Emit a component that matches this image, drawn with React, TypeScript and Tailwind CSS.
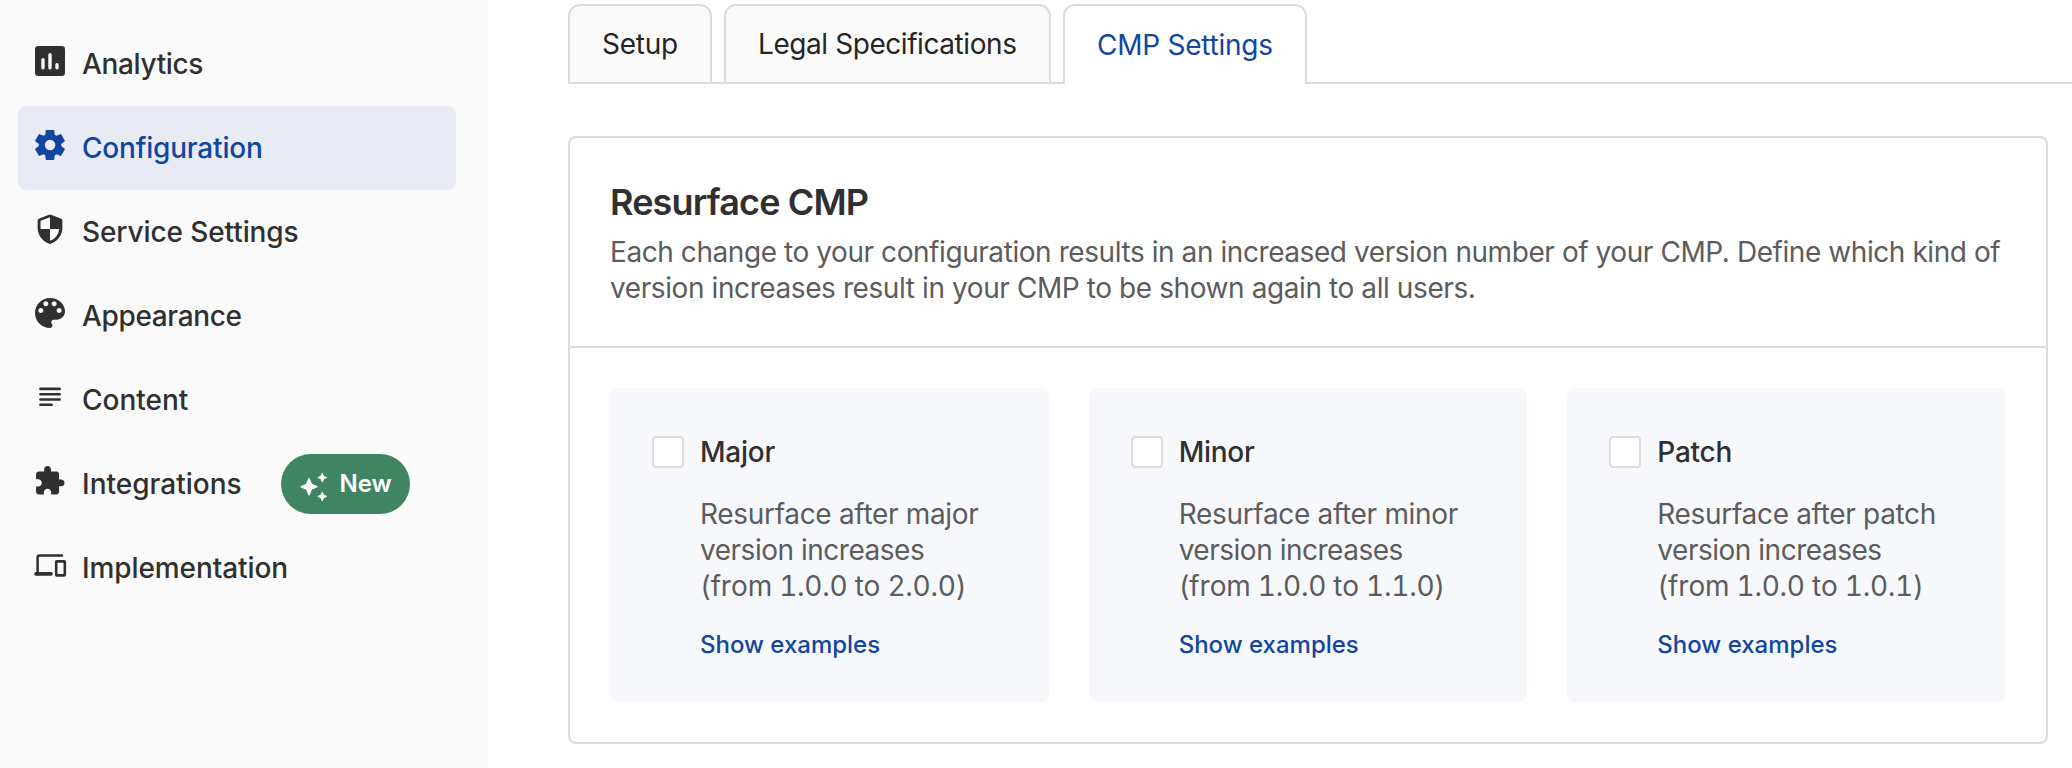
import React, { useState } from 'react';

interface NavItem {
    label: string;
    icon: React.ReactNode;
    textClass: string;
    isNew?: boolean;
}

interface VersionOption {
    title: string;
    description: string;
    range: string;
}

const AnalyticsIcon = () => (
    <svg viewBox="0 0 36 36" className="w-9 h-9" fill="currentColor">
        <rect x="3" y="3" width="30" height="30" rx="3.3" />
        <g fill="#fafafa">
            <rect x="9.3" y="15" width="3.4" height="11.5" rx="1.7" />
            <rect x="16.3" y="10" width="3.4" height="16.5" rx="1.7" />
            <rect x="23.3" y="20" width="3.4" height="6.5" rx="1.7" />
        </g>
    </svg>
);

const SettingsIcon = () => (
    <svg viewBox="0 -960 960 960" className="w-9 h-9" fill="currentColor">
        <path d="m370-80-16-128q-13-5-24.5-12T307-235l-119 50L78-375l103-78q-1-7-1-13.5v-27q0-6.5 1-13.5L78-585l110-190 119 50q11-8 23-15t24-12l16-128h220l16 128q13 5 24.5 12t22.5 15l119-50 110 190-103 78q1 7 1 13.5v27q0 6.5-2 13.5l103 78-110 190-118-50q-11 8-23 15t-24 12L590-80H370Zm112-260q58 0 99-41t41-99q0-58-41-99t-99-41q-59 0-99.5 41T342-480q0 58 40.5 99t99.5 41Z" />
    </svg>
);

const ShieldIcon = () => (
    <svg viewBox="0 -960 960 960" className="w-9 h-9" fill="currentColor">
        <path d="M480-80q-139-35-234.5-159.5T150-516v-189q0-35 32-48l270-105q28-10 56 0l270 105q32 13 32 48v189q0 152-95.5 276.5T480-80Zm0-84q97-30 165-118.5T725-480H480v-315l-252 98v199q0 7 2 18h250v316Z" />
    </svg>
);

const PaletteIcon = () => (
    <svg viewBox="0 0 24 24" className="w-10 h-10 -m-0.5" fill="currentColor">
        <path d="M12 3c-4.97 0-9 4.03-9 9s4.03 9 9 9c.83 0 1.5-.67 1.5-1.5 0-.39-.15-.74-.39-1.01-.23-.26-.38-.61-.38-.99 0-.83.67-1.5 1.5-1.5H16c2.76 0 5-2.24 5-5 0-4.42-4.03-8-9-8zm-5.5 9c-.83 0-1.5-.67-1.5-1.5S5.67 9 6.5 9 8 9.67 8 10.5 7.33 12 6.5 12zm3-4C8.67 8 8 7.33 8 6.5S8.67 5 9.5 5s1.5.67 1.5 1.5S10.33 8 9.5 8zm5 0c-.83 0-1.5-.67-1.5-1.5S13.67 5 14.5 5s1.5.67 1.5 1.5S15.33 8 14.5 8zm3 4c-.83 0-1.5-.67-1.5-1.5S16.67 9 17.5 9s1.5.67 1.5 1.5-.67 1.5-1.5 1.5z" />
    </svg>
);

const ContentIcon = () => (
    <svg viewBox="0 0 36 36" className="w-9 h-9" fill="currentColor">
        <rect x="7.2" y="8.6" width="21.7" height="2.6" rx="1.2" />
        <rect x="7.2" y="13.9" width="21.7" height="2.6" rx="1.2" />
        <rect x="7.2" y="19.2" width="21.7" height="2.6" rx="1.2" />
        <rect x="7.2" y="24.5" width="13.6" height="2.6" rx="1.2" />
    </svg>
);

const PuzzleIcon = () => (
    <svg viewBox="-1 -1.2 26.6 26.6" className="w-9 h-9" fill="currentColor">
        <path d="M20.5 11H19V7c0-1.1-.9-2-2-2h-4V3.5C13 2.12 11.88 1 10.5 1S8 2.12 8 3.5V5H4c-1.1 0-1.99.9-1.99 2v3.8H3.5c1.49 0 2.7 1.21 2.7 2.7s-1.21 2.7-2.7 2.7H2V20c0 1.1.9 2 2 2h3.8v-1.5c0-1.49 1.21-2.7 2.7-2.7 1.49 0 2.7 1.21 2.7 2.7V22H17c1.1 0 2-.9 2-2v-4h1.5c1.38 0 2.5-1.12 2.5-2.5S21.88 11 20.5 11z" />
    </svg>
);

const DevicesIcon = () => (
    <svg viewBox="0 0 36 36" className="w-9 h-9" fill="none" stroke="currentColor" strokeLinecap="round">
        <path d="M30 8.4H7.6a2 2 0 0 0-2 2V27" strokeWidth="2.5" />
        <path d="M4 26.9h15" strokeWidth="3.6" />
        <rect x="24.2" y="14.4" width="8.6" height="14" rx="0.6" strokeWidth="2.6" />
    </svg>
);

const SparkleIcon = () => (
    <svg viewBox="0 0 28 28" className="w-7 h-7 overflow-visible" fill="currentColor" stroke="currentColor" strokeWidth="1.2" strokeLinejoin="round">
        <path d="M9 5.6l2.5 5.7L17.2 13.8l-5.7 2.5L9 22l-2.5-5.7L0.8 13.8l5.7-2.5z" />
        <path d="M22.3 0.6l1.2 2.8 2.8 1.2-2.8 1.2-1.2 2.8-1.2-2.8-2.8-1.2 2.8-1.2z" />
        <path d="M22.3 19.4l1.2 2.8 2.8 1.2-2.8 1.2-1.2 2.8-1.2-2.8-2.8-1.2 2.8-1.2z" />
    </svg>
);

const navItems: NavItem[] = [
    { label: "Analytics", icon: <AnalyticsIcon />, textClass: "tracking-[-0.35px]" },
    { label: "Configuration", icon: <SettingsIcon />, textClass: "tracking-[-0.2px]" },
    { label: "Service Settings", icon: <ShieldIcon />, textClass: "tracking-[-0.1px]" },
    { label: "Appearance", icon: <PaletteIcon />, textClass: "tracking-[-0.36px]" },
    { label: "Content", icon: <ContentIcon />, textClass: "" },
    { label: "Integrations", icon: <PuzzleIcon />, textClass: "", isNew: true },
    { label: "Implementation", icon: <DevicesIcon />, textClass: "tracking-[-0.1px]" }
];

const tabs = [
    { label: "Setup", className: "w-36 tracking-[-0.26px]" },
    { label: "Legal Specifications", className: "w-[327px] tracking-[-0.43px]" },
    { label: "CMP Settings", className: "w-[244px] tracking-[-0.25px]" }
];

const versionOptions: VersionOption[] = [
    { title: "Major", description: "Resurface after major", range: "(from 1.0.0 to 2.0.0)" },
    { title: "Minor", description: "Resurface after minor", range: "(from 1.0.0 to 1.1.0)" },
    { title: "Patch", description: "Resurface after patch", range: "(from 1.0.0 to 1.0.1)" }
];

const App: React.FC = () => {
    const [activeNav, setActiveNav] = useState<string>("Configuration");
    const [activeTab, setActiveTab] = useState<string>("CMP Settings");
    const [checked, setChecked] = useState<string[]>([]);

    const toggleOption = (title: string): void => {
        setChecked(checked.includes(title) ? checked.filter((t) => t !== title) : [...checked, title]);
    };

    return (
        <div className="flex h-[768px] w-[2072px] overflow-hidden bg-white font-['Inter',sans-serif] text-[28px] text-[#303030]">
            <aside className="w-[488px] shrink-0 bg-[#fafafa] pt-[22px] pl-[18px] pr-8">
                {navItems.map((item) => (
                    <button
                        key={item.label}
                        onClick={() => setActiveNav(item.label)}
                        className={`flex h-[84px] w-full items-center rounded-lg pl-3.5 text-left font-medium ${activeNav === item.label ? 'bg-[#e8ebf3] text-[#1146a0]' : ''}`}
                    >
                        <span className="mr-3.5 mb-1.5 flex">{item.icon}</span>
                        <span className={`whitespace-nowrap ${item.textClass}`}>{item.label}</span>
                        {item.isNew && (
                            <span className="ml-[39px] flex h-[60px] w-[129px] items-center rounded-full bg-[#3f8463] pl-[19px] text-2xl font-semibold text-white">
                                <span className="mr-3 mt-1.5"><SparkleIcon /></span>
                                New
                            </span>
                        )}
                    </button>
                ))}
            </aside>

            <main className="flex-1 pl-20 pt-1">
                <div className="flex h-20">
                    {tabs.map((tab, index) => (
                        <React.Fragment key={tab.label}>
                            <button
                                onClick={() => setActiveTab(tab.label)}
                                className={`${tab.className} whitespace-nowrap rounded-t-xl border-2 border-[#dcdcdc] pl-8 text-left ${activeTab === tab.label ? 'border-b-0 bg-white text-[#1146a0]' : 'bg-[#fafafa] text-[#252525]'}`}
                            >
                                {tab.label}
                            </button>
                            <span className={`border-b-2 border-[#dcdcdc] ${index < tabs.length - 1 ? 'w-3' : 'flex-1'}`} />
                        </React.Fragment>
                    ))}
                </div>

                <section className="mt-[52px] h-[608px] w-[1480px] rounded-lg border-2 border-[#dcdcdc]">
                    <div className="h-[210px] border-b-2 border-[#dcdcdc] px-10 pt-10">
                        <h2 className="text-4xl leading-[48px] font-semibold tracking-[-0.86px]">Resurface CMP</h2>
                        <p className="mt-2 whitespace-nowrap leading-9 tracking-[-0.43px] text-[#5c5c5c]">
                            Each change to your configuration results in an increased version number of your CMP. Define which kind of
                            <br />
                            <span className="tracking-[-0.41px]">version increases result in your CMP to be shown again to all users.</span>
                        </p>
                    </div>
                    <div className="grid grid-cols-3 gap-10 p-10">
                        {versionOptions.map((option) => (
                            <div key={option.title} className="h-[314px] rounded-lg bg-[#f7f8fc] pl-[42px] pt-12">
                                <label className="flex h-8 items-center gap-4 font-medium tracking-[-0.25px]">
                                    <input
                                        type="checkbox"
                                        checked={checked.includes(option.title)}
                                        onChange={() => toggleOption(option.title)}
                                        className="h-8 w-8 appearance-none rounded border-2 border-[#dcdcdc] bg-white checked:bg-[#1146a0]"
                                    />
                                    {option.title}
                                </label>
                                <div className="pl-12 pt-7">
                                    <p className="whitespace-nowrap leading-9 text-[#5c5c5c]">
                                        <span className="block tracking-[-0.32px]">{option.description}</span>
                                        <span className="block tracking-[-0.48px]">version increases</span>
                                        <span className="block tabular-nums tracking-[-0.25px] [font-kerning:none]">{option.range}</span>
                                    </p>
                                    <button className="mt-[25px] block text-2xl font-medium text-[#1146a0]">Show examples</button>
                                </div>
                            </div>
                        ))}
                    </div>
                </section>
            </main>
        </div>
    );
};

export default App;
